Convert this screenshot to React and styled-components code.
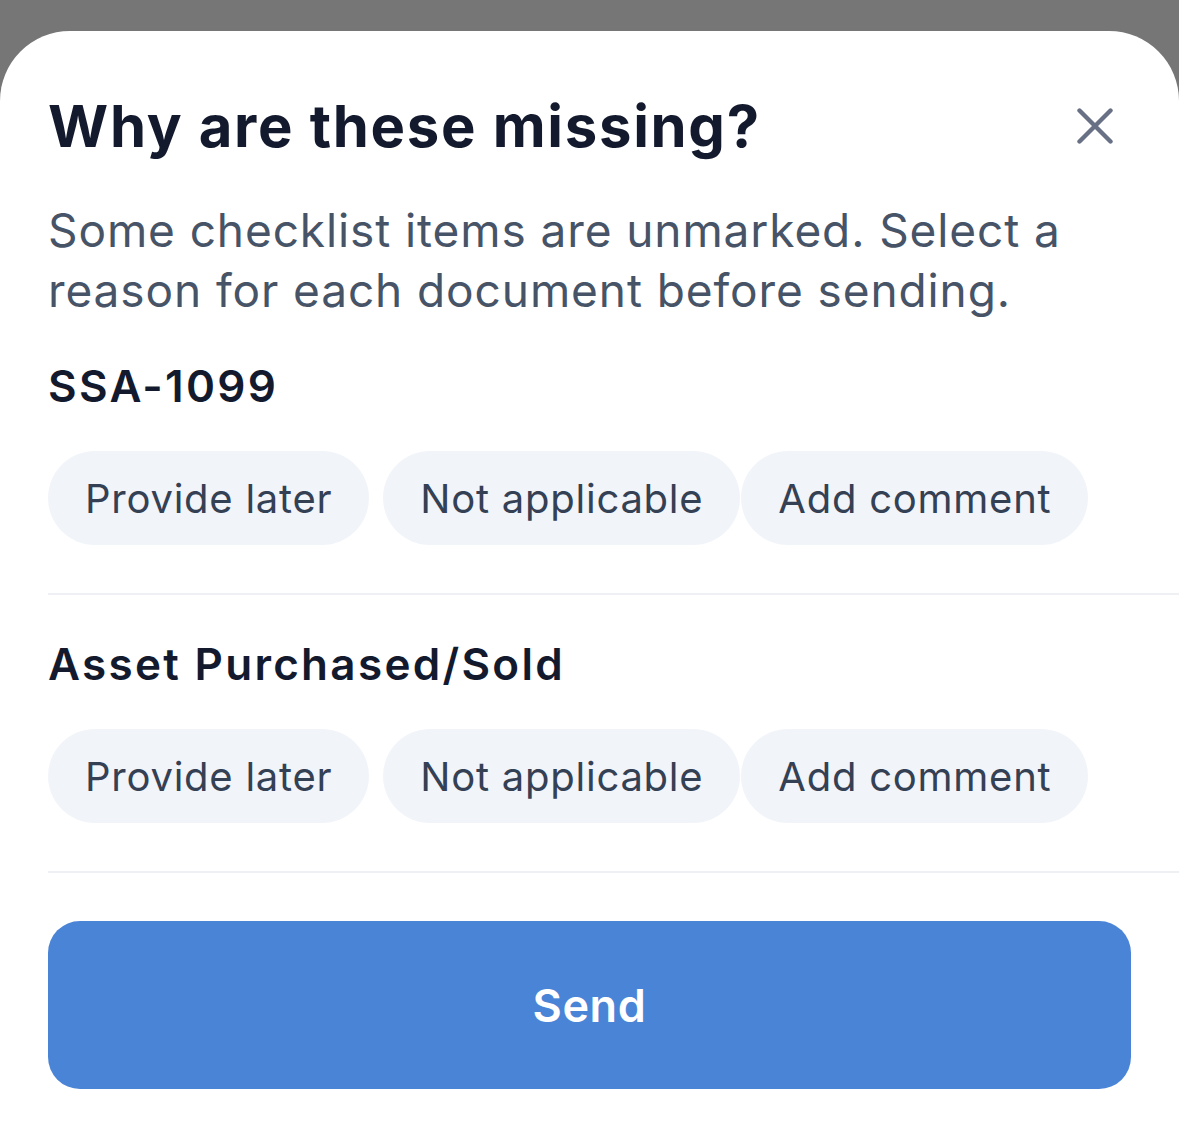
import styled, { createGlobalStyle } from 'styled-components';

const GlobalStyle = createGlobalStyle`
  html, body {
    margin: 0;
    padding: 0;
    background: #767676;
    font-family: Inter, "Noto Sans", sans-serif;
  }
  * { box-sizing: border-box; }
`;

const Backdrop = styled.div`
  min-height: 1131px;
  padding-top: 31px;
  display: flex;
  flex-direction: column;
`;

const Sheet = styled.div`
  flex: 1;
  background: #fff;
  border-radius: 70px 70px 0 0;
  padding: 60px 0 41px 48px;
  display: flex;
  flex-direction: column;
`;

const Header = styled.div`
  display: flex;
  align-items: center;
  justify-content: space-between;
  margin-right: 48px;
`;

const Title = styled.h1`
  margin: 0;
  font-size: 58px;
  line-height: 70px;
  font-weight: 700;
  color: #141a2e;
  letter-spacing: 1.7px;
`;

const CloseButton = styled.button`
  width: 60px;
  height: 60px;
  margin-right: 6px;
  border: none;
  background: none;
  padding: 0;
  display: flex;
  align-items: center;
  justify-content: center;
  cursor: pointer;
`;

const Description = styled.p`
  margin: 39px 48px 0 0;
  font-size: 46px;
  line-height: 60px;
  font-weight: 400;
  color: #475467;
  letter-spacing: 0.9px;
`;

const Section = styled.section`
  display: flex;
  flex-direction: column;
  border-bottom: 2px solid #eef0f3;
  padding-bottom: 48px;
  margin-top: ${(p) => (p.$first ? '38px' : '41px')};
`;

const DocTitle = styled.h2`
  margin: 0;
  font-size: 44px;
  line-height: 56px;
  font-weight: 600;
  color: #141a2e;
  letter-spacing: 2.3px;
`;

const ChipRow = styled.div`
  display: flex;
  margin-top: 37px;
`;

const Chip = styled.button`
  height: 94px;
  padding: 0 37px;
  margin-right: ${(p) => p.$space}px;
  border: none;
  border-radius: 47px;
  background: #f1f4f9;
  color: #344054;
  font-family: inherit;
  font-size: 40px;
  font-weight: 400;
  letter-spacing: 0.75px;
  cursor: pointer;
`;

const SendButton = styled.button`
  margin: 48px 48px 0 0;
  height: 168px;
  border: none;
  border-radius: 32px;
  background: #4a84d6;
  color: #fff;
  font-family: inherit;
  font-size: 45px;
  font-weight: 600;
  letter-spacing: 0.6px;
  cursor: pointer;
`;

const options = [
  { label: 'Provide later', space: 14 },
  { label: 'Not applicable', space: 1 },
  { label: 'Add comment', space: 0 },
];

const docs = ['SSA-1099', 'Asset Purchased/Sold'];

const CloseIcon = () => (
  <svg width="36" height="36" viewBox="0 0 36 36" fill="none">
    <path
      d="M2.5 2.5L33.5 33.5M33.5 2.5L2.5 33.5"
      stroke="#687086"
      strokeWidth="4.4"
      strokeLinecap="round"
    />
  </svg>
);

export default function App() {
  return (
    <>
      <GlobalStyle />
      <Backdrop>
        <Sheet>
          <Header>
            <Title>Why are these missing?</Title>
            <CloseButton aria-label="Close">
              <CloseIcon />
            </CloseButton>
          </Header>
          <Description>
            Some checklist items are unmarked. Select a reason for each document before sending.
          </Description>
          {docs.map((doc, i) => (
            <Section key={doc} $first={i === 0}>
              <DocTitle>{doc}</DocTitle>
              <ChipRow>
                {options.map((o) => (
                  <Chip key={o.label} $space={o.space}>
                    {o.label}
                  </Chip>
                ))}
              </ChipRow>
            </Section>
          ))}
          <SendButton>Send</SendButton>
        </Sheet>
      </Backdrop>
    </>
  );
}
